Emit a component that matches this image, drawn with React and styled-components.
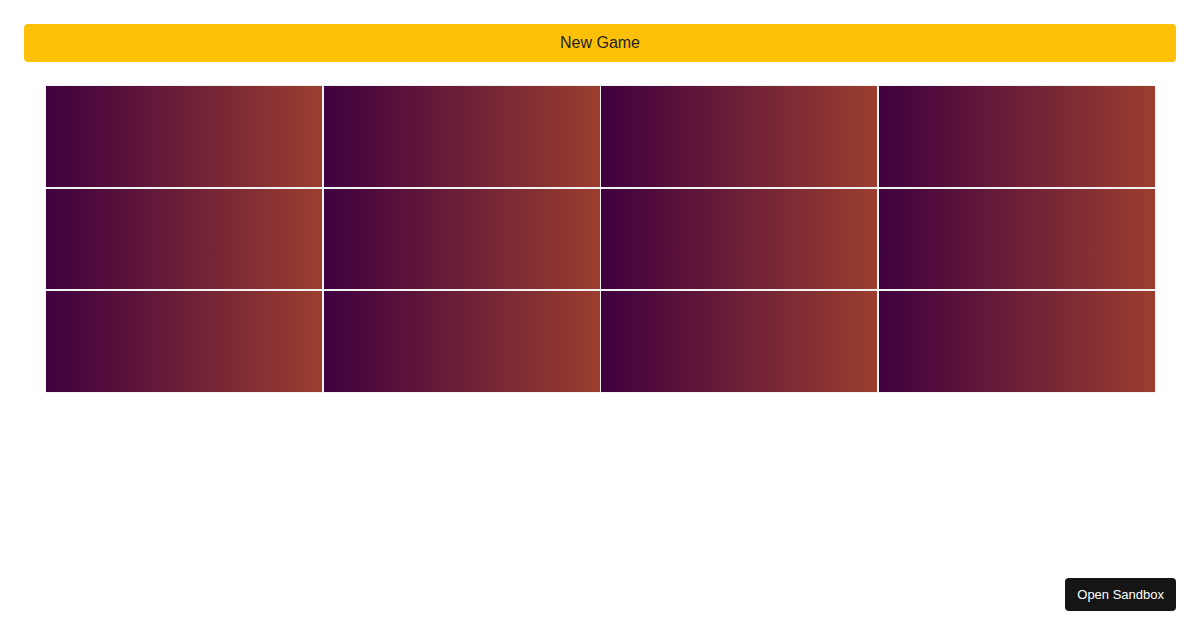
import React from "react";
import styled, { createGlobalStyle } from "styled-components";

const Global = createGlobalStyle`
  html, body { margin: 0; padding: 0; background: #fff; }
  body { font-family: "Liberation Sans", Arial, sans-serif; }
`;

const Page = styled.div`
  padding: 24px;
  height: 630px;
  box-sizing: border-box;
  position: relative;
`;

const NewGameButton = styled.button`
  display: block;
  width: 100%;
  height: 38px;
  border: none;
  border-radius: 4px;
  background: #ffc107;
  color: #222;
  font-family: "Liberation Sans", Arial, sans-serif;
  font-size: 16px;
  cursor: pointer;
`;

const Board = styled.div`
  margin: 24px 21px 0 22px;
  display: grid;
  grid-template-columns: repeat(4, 1fr);
  grid-auto-rows: 100.5px;
  row-gap: 2px;
  column-gap: 1.5px;
  background: #fff;
`;

const Card = styled.div`
  background: linear-gradient(to right, #3f003f, #9b3e2f);
  box-shadow: 0 0 0 0.5px #e4e4e4;
`;

const SandboxButton = styled.button`
  position: absolute;
  right: 24px;
  bottom: 19px;
  height: 33px;
  padding: 0 12px 0 12px;
  border: none;
  border-radius: 4px;
  background: #151515;
  color: #fff;
  font-family: "Liberation Sans", Arial, sans-serif;
  font-size: 13px;
`;

export default function App() {
  const cards = Array.from({ length: 12 }, (_, i) => i);
  return (
    <>
      <Global />
      <Page>
        <NewGameButton>New Game</NewGameButton>
        <Board>
          {cards.map((i) => (
            <Card key={i} />
          ))}
        </Board>
        <SandboxButton>Open Sandbox</SandboxButton>
      </Page>
    </>
  );
}
